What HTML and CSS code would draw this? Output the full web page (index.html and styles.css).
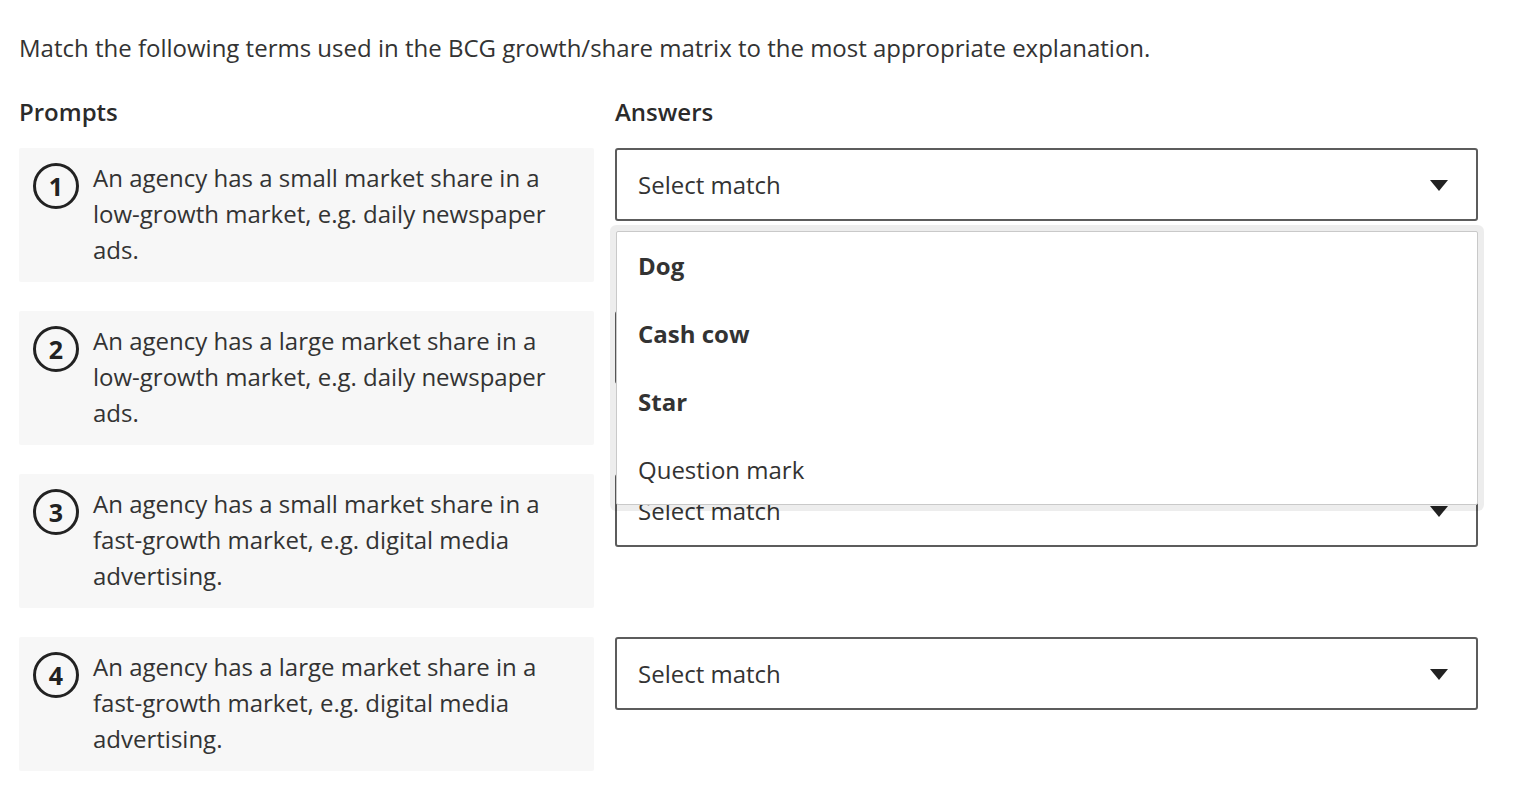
FILE: index.html
```html
<!DOCTYPE html>
<html lang="en">
<head>
<meta charset="utf-8">
<title>BCG matching</title>
<link rel="stylesheet" href="styles.css">
</head>
<body>
<main class="question">
  <p class="intro">Match the following terms used in the BCG growth/share matrix to the most appropriate explanation.</p>
  <div class="matrix">
    <h3 class="col-head">Prompts</h3>
    <h3 class="col-head">Answers</h3>

    <div class="prompt"><span class="num">1</span><p>An agency has a small market share in a low-growth market, e.g. daily newspaper ads.</p></div>
    <div class="answer">
      <div class="select"><span>Select match</span><span class="caret"></span></div>
      <ul class="menu">
        <li class="strong">Dog</li>
        <li class="strong">Cash cow</li>
        <li class="strong">Star</li>
        <li>Question mark</li>
      </ul>
    </div>

    <div class="prompt"><span class="num">2</span><p>An agency has a large market share in a low-growth market, e.g. daily newspaper ads.</p></div>
    <div class="answer"><div class="select"><span>Select match</span><span class="caret"></span></div></div>

    <div class="prompt"><span class="num">3</span><p>An agency has a small market share in a fast-growth market, e.g. digital media advertising.</p></div>
    <div class="answer"><div class="select"><span>Select match</span><span class="caret"></span></div></div>

    <div class="prompt"><span class="num">4</span><p>An agency has a large market share in a fast-growth market, e.g. digital media advertising.</p></div>
    <div class="answer"><div class="select"><span>Select match</span><span class="caret"></span></div></div>
  </div>
</main>
</body>
</html>
```

FILE: styles.css
```css
* { box-sizing: border-box; }
body {
  margin: 0;
  background: #fff;
  font-family: "Open Sans", "Noto Sans", sans-serif;
  font-size: 24px;
  line-height: 36px;
  color: #333;
}
.question { padding: 30px 0 0 19px; }
.intro { margin: 0 0 28px; }
.matrix {
  display: grid;
  grid-template-columns: 575px 863px;
  column-gap: 21px;
  row-gap: 29px;
}
.col-head {
  margin: 0 0 -11px;
  font-size: 24px;
  font-weight: 600;
  line-height: 36px;
  color: #2b2b2b;
}
.prompt {
  display: flex;
  align-items: flex-start;
  gap: 14px;
  height: 134px;
  padding: 12px 14px;
  background: #f7f7f7;
  border-radius: 2px;
}
.prompt p { margin: 0; width: 470px; }
.num {
  flex: none;
  width: 46px;
  height: 46px;
  margin-top: 3px;
  border: 3px solid #222;
  border-radius: 50%;
  display: flex;
  align-items: center;
  justify-content: center;
  font-weight: 700;
  font-size: 25px;
  color: #222;
}
.answer { position: relative; }
.select {
  height: 73px;
  border: 2px solid #5c5c5c;
  border-radius: 3px;
  background: #fff;
  display: flex;
  align-items: center;
  justify-content: space-between;
  padding: 0 28px 0 21px;
}
.caret {
  width: 0;
  height: 0;
  border-left: 9px solid transparent;
  border-right: 9px solid transparent;
  border-top: 11px solid #222;
  margin-top: 2px;
}
.menu {
  position: absolute;
  z-index: 2;
  top: 83px;
  left: 1px;
  right: 0;
  margin: 0;
  padding: 0;
  list-style: none;
  background: #fff;
  border: 1px solid #c9c9c9;
  border-radius: 2px;
  box-shadow: 0 0 0 6px rgba(0, 0, 0, 0.07);
}
.menu li {
  height: 68px;
  display: flex;
  align-items: center;
  padding-left: 21px;
}
.menu li.strong { font-weight: 700; }
```
